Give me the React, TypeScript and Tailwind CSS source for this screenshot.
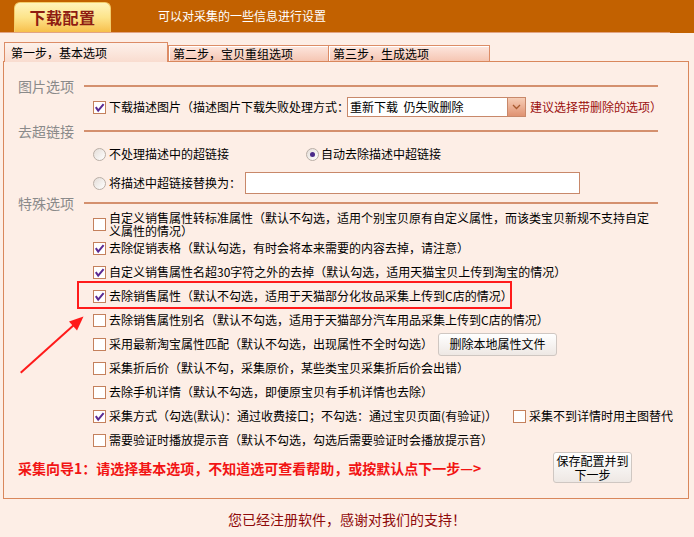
import React from "react";

function Check({ checked }: { checked?: boolean }) {
  return (
    <span className="w-[13px] h-[13px] shrink-0 border border-[#c4805c] bg-white flex items-center justify-center">
      {checked && (
        <svg width="11" height="11" viewBox="0 0 11 11">
          <path d="M1.8 5.2 L4.2 8.6 L9.6 2.2" fill="none" stroke="#5a2a92" strokeWidth="2" />
        </svg>
      )}
    </span>
  );
}

function Radio({ checked }: { checked?: boolean }) {
  return (
    <span className="w-[13px] h-[13px] shrink-0 rounded-full border border-[#b9aea6] bg-gradient-to-br from-[#e4ddd8] to-white flex items-center justify-center">
      {checked && <span className="w-[5px] h-[5px] rounded-full bg-[#4a2a8a]" />}
    </span>
  );
}

function Heading({ label, h = "h-[20px]" }: { label: string; h?: string }) {
  return (
    <div className={`flex items-center pl-[14px] ${h}`}>
      <span className="w-[66px] text-[14px] leading-[14px] text-[#8a8a8a] whitespace-nowrap">{label}</span>
      <div className="flex-1 h-[2px] bg-[#d4906e] mr-[30px]" />
    </div>
  );
}

function Item({ checked, children }: { checked?: boolean; children: React.ReactNode }) {
  return (
    <div className="flex items-center h-[24px] pl-[89px] gap-[3px] whitespace-nowrap">
      <Check checked={checked} />
      <span>{children}</span>
    </div>
  );
}

export default function App() {
  return (
    <div
      className="relative w-[694px] h-[537px] bg-[#fdeee6] text-[12px] leading-[14px] text-black overflow-hidden"
      style={{ fontFamily: '"Noto Sans CJK SC", "Liberation Sans", sans-serif' }}
    >
      {/* header */}
      <div className="h-[32px] bg-[#c26100] flex items-end pl-[14px]">
        <div className="w-[97px] h-[30px] rounded-t-[6px] border border-b-0 border-[#f3cc6a] bg-gradient-to-b from-[#fff3bb] via-[#fde48a] to-[#f7c04a] flex items-center justify-center">
          <span className="text-[16px] font-bold tracking-[0.5px] text-[#8e1c12] leading-[17px]">下载配置</span>
        </div>
        <span className="ml-[47px] self-center text-white text-[12px]">可以对采集的一些信息进行设置</span>
      </div>
      <div className="flex h-[1px]">
        <div className="w-[670px] bg-[#e2a482]" />
        <div className="flex-1 bg-[#c26100]" />
      </div>

      {/* tabs */}
      <div className="mt-[9px] ml-[4px] flex items-end h-[19px]">
        <div className="relative z-10 -mb-px w-[164px] h-[20px] border border-b-0 border-[#dc8c66] bg-gradient-to-b from-[#fdf1eb] to-[#f9dccf] pl-[6px] flex items-center">
          第一步，基本选项
        </div>
        <div className="w-[161px] h-[16px] border border-b-0 border-[#dc8c66] bg-gradient-to-b from-[#fde6de] to-[#f5c6b3] shadow-[inset_1px_1px_0_#fff] pl-[4px] flex items-center">
          第二步，宝贝重组选项
        </div>
        <div className="w-[161px] h-[16px] border border-l-0 border-b-0 border-[#dc8c66] bg-gradient-to-b from-[#fde6de] to-[#f5c6b3] shadow-[inset_1px_1px_0_#fff] pl-[4px] flex items-center">
          第三步，生成选项
        </div>
      </div>

      {/* panel */}
      <div className="ml-[3px] w-[686px] border border-[#d9875c] pt-[14px] pb-[15px]">
        <Heading label="图片选项" />
        <div className="flex items-center h-[22px] pl-[89px] whitespace-nowrap">
          <Check checked />
          <span className="ml-[3px]">下载描述图片（描述图片下载失败处理方式：</span>
          <div className="ml-[-2px] w-[179px] h-[20px] border border-[#c8886a] bg-white flex items-center">
            <span className="flex-1 pl-[2px]">重新下载&nbsp;&nbsp;仍失败删除</span>
            <span className="w-[18px] h-[18px] border-l border-[#c8886a] bg-gradient-to-b from-[#f6cdb6] to-[#df9272] flex items-center justify-center">
              <svg width="9" height="6" viewBox="0 0 9 6">
                <path d="M1 1 L4.5 4.5 L8 1" fill="none" stroke="#a85a30" strokeWidth="1.3" />
              </svg>
            </span>
          </div>
          <span className="ml-[4px] text-[#9b0e0e]">建议选择带删除的选项）</span>
        </div>

        <div className="mt-[3px]">
          <Heading label="去超链接" />
        </div>
        <div className="mt-[3px] flex items-center h-[20px] pl-[89px] whitespace-nowrap">
          <div className="w-[213px] flex items-center gap-[3px]">
            <Radio />
            <span>不处理描述中的超链接</span>
          </div>
          <div className="flex items-center gap-[2px]">
            <Radio checked />
            <span>自动去除描述中超链接</span>
          </div>
        </div>
        <div className="mt-[8px] flex items-center h-[22px] pl-[89px] whitespace-nowrap">
          <Radio />
          <span className="ml-[3px]">将描述中超链接替换为：</span>
          <div className="ml-[4px] w-[335px] h-[22px] border border-[#c8886a] bg-white" />
        </div>

        <Heading label="特殊选项" h="h-[18px]" />
        <div className="flex items-center h-[24px] pl-[89px] gap-[3px] whitespace-nowrap">
          <Check />
          <span className="leading-[13px]">
            自定义销售属性转标准属性（默认不勾选，适用个别宝贝原有自定义属性，而该类宝贝新规不支持自定
            <br />
            义属性的情况）
          </span>
        </div>
        <Item checked>去除促销表格（默认勾选，有时会将本来需要的内容去掉，请注意）</Item>
        <Item checked>自定义销售属性名超30字符之外的去掉（默认勾选，适用天猫宝贝上传到淘宝的情况）</Item>
        <Item checked>去除销售属性（默认不勾选，适用于天猫部分化妆品采集上传到C店的情况）</Item>
        <Item>去除销售属性别名（默认不勾选，适用于天猫部分汽车用品采集上传到C店的情况）</Item>
        <div className="flex items-center h-[24px] pl-[89px] whitespace-nowrap">
          <div className="w-[345px] flex items-center gap-[3px]">
            <Check />
            <span>采用最新淘宝属性匹配（默认不勾选，出现属性不全时勾选）</span>
          </div>
          <button className="w-[119px] h-[23px] rounded-[3px] border border-[#cfc7c2] bg-gradient-to-b from-white to-[#eee8e4] text-[12px] text-black">
            删除本地属性文件
          </button>
        </div>
        <Item>采集折后价（默认不勾，采集原价，某些类宝贝采集折后价会出错）</Item>
        <Item>去除手机详情（默认不勾选，即便原宝贝有手机详情也去除）</Item>
        <div className="flex items-center h-[24px] pl-[89px] whitespace-nowrap">
          <div className="w-[420px] flex items-center gap-[3px]">
            <Check checked />
            <span>采集方式（勾选(默认)：通过收费接口；不勾选：通过宝贝页面(有验证)）</span>
          </div>
          <Check />
          <span className="ml-[3px]">采集不到详情时用主图替代</span>
        </div>
        <Item>需要验证时播放提示音（默认不勾选，勾选后需要验证时会播放提示音）</Item>

        <div className="flex items-center h-[31px] pl-[14px] whitespace-nowrap">
          <span className="w-[535px] text-[14px] font-bold text-[#f21414]">
            采集向导1：请选择基本选项，不知道选可查看帮助，或按默认点下一步—&gt;
          </span>
          <button className="w-[79px] h-[31px] rounded-[3px] border border-[#cfc7c2] bg-gradient-to-b from-white to-[#eee8e4] text-[12px] leading-[14px] text-black flex flex-col items-center justify-center">
            <span>保存配置并到</span>
            <span>下一步</span>
          </button>
        </div>
      </div>

      {/* footer */}
      <div className="h-[38px] pt-[2px] flex items-center justify-center text-[14px] text-[#8f0a0a]">
        您已经注册软件，感谢对我们的支持！
      </div>

      {/* annotations */}
      <svg className="absolute left-0 top-0 pointer-events-none" width="694" height="537" viewBox="0 0 694 537">
        <rect x="78" y="282" width="433" height="26" fill="none" stroke="#ff1a1a" strokeWidth="2" />
        <line x1="20.7" y1="372.7" x2="75" y2="324" stroke="#ff1a1a" strokeWidth="2" />
        <polygon points="83.5,316.5 69,321.5 77,330.5" fill="#ff1a1a" />
      </svg>
    </div>
  );
}
